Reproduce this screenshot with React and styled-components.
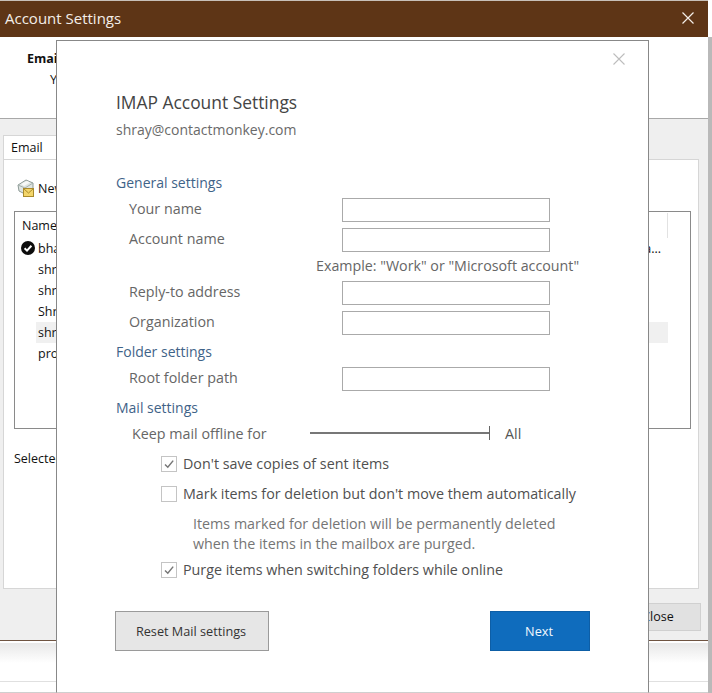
import React from "react";
import styled, { createGlobalStyle } from "styled-components";

const Global = createGlobalStyle`
  html, body { margin: 0; padding: 0; background: #fff; }
  body { font-family: "Open Sans", "Liberation Sans", sans-serif; }
  * { box-sizing: border-box; }
`;

const Page = styled.div`
  position: relative;
  width: 712px;
  height: 693px;
  overflow: hidden;
  display: flex;
  background: #fff;
`;
const Backdrop = styled.div`
  width: 708px;
  height: 693px;
  display: flex;
  flex-direction: column;
  font-size: 12.5px;
  color: #111;
`;
const EdgeBar = styled.div`
  width: 4px;
  margin-top: 37px;
  background: #b9b9b9;
`;
const TopStrip = styled.div`
  height: 1px;
  background: #c8c0b8;
`;
const TitleBar = styled.div`
  height: 36px;
  background: #5e3516;
  color: #f4eee8;
  display: flex;
  align-items: center;
  justify-content: space-between;
  padding: 0 14px 2px 5px;
  font-size: 15px;
`;
const Header = styled.div`
  height: 82px;
  border-bottom: 1px solid #a8a8a8;
  padding: 12px 0 0 27px;
`;
const HeaderTitle = styled.div`
  font-weight: 700;
  line-height: 20px;
`;
const HeaderText = styled.div`
  margin: 1px 0 0 23px;
  line-height: 20px;
  white-space: nowrap;
`;
const Body = styled.div`
  height: 522px;
  background: #efefef;
  padding: 16px 0 0 3px;
  display: flex;
  flex-direction: column;
`;
const Tab = styled.div`
  width: 70px;
  height: 25px;
  background: #fff;
  border: 1px solid #d6d6d6;
  border-bottom: none;
  padding-left: 7px;
  line-height: 23px;
`;
const TabPanel = styled.div`
  width: 696px;
  height: 430px;
  margin-top: -1px;
  background: #fff;
  border: 1px solid #d6d6d6;
  padding: 0 7px 0 10px;
`;
const Toolbar = styled.div`
  height: 51px;
  padding: 6px 0 0 3px;
  display: flex;
  align-items: center;
  gap: 4px;
`;
const AccountList = styled.div`
  height: 218px;
  border: 1px solid #8a8a8a;
`;
const ListHead = styled.div`
  height: 25px;
  margin-top: 1px;
  padding-left: 7px;
  line-height: 25px;
  width: 653px;
  border-right: 1px solid #e2e2e2;
`;
const AccountRow = styled.div`
  display: grid;
  grid-template-columns: 21px 632px;
  height: 21px;
`;
const StatusSlot = styled.div`
  display: flex;
  align-items: center;
  padding-left: 6px;
`;
const RowBody = styled.div`
  display: flex;
  justify-content: space-between;
  align-items: center;
  padding: 0 7px 0 2px;
  background: ${(p) => (p.$selected ? "#f0f0f0" : "transparent")};
`;
const SelectedNote = styled.div`
  margin-top: 20px;
  line-height: 20px;
`;
const Actions = styled.div`
  display: flex;
  justify-content: flex-end;
  margin-top: 14px;
  padding-right: 7px;
`;
const CloseAction = styled.div`
  width: 86px;
  height: 28px;
  background: #e1e1e1;
  border: 1px solid #d0d0d0;
  display: flex;
  align-items: center;
  justify-content: center;
`;
const ClippedLine = styled.div`
  height: 3px;
  overflow: hidden;
  border-top: 1px solid #6f5442;
  white-space: nowrap;
  line-height: 12px;
`;
const ClippedText = styled.div`
  margin-top: -10px;
`;
const Shadow = styled.div`
  height: 25px;
  background: linear-gradient(#e8e8e8, #fff 80%);
`;
const Spacer = styled.div`
  height: 13px;
`;
const FootLine = styled.div`
  height: 11px;
  border-top: 1px solid #e0e0e0;
`;
const FootEnd = styled.div`
  height: 1px;
  background: #cfcfcf;
`;

const Modal = styled.div`
  position: absolute;
  left: 56px;
  top: 40px;
  width: 593px;
  height: 653px;
  background: #fff;
  border: 1px solid #888;
  border-bottom-color: #cfcfcf;
  padding: 49px 59px 0 59px;
`;
const ModalClose = styled.div`
  position: absolute;
  right: 23px;
  top: 12px;
  display: flex;
`;
const Title = styled.div`
  font-size: 17.4px;
  line-height: 24px;
  color: #444;
`;
const Subtitle = styled.div`
  margin-top: 6px;
  font-size: 14px;
  line-height: 20px;
  color: #6a6a6a;
`;
const Section = styled.div`
  margin-top: ${(p) => p.$top}px;
  font-size: 14px;
  line-height: 20px;
  color: #3f6388;
`;
const Field = styled.div`
  display: grid;
  grid-template-columns: 226px 208px;
  align-items: center;
  height: 24px;
  margin-top: ${(p) => p.$top}px;
`;
const FieldLabel = styled.div`
  padding-left: 13px;
  padding-bottom: 3px;
  font-size: 14.3px;
  color: #666;
`;
const Input = styled.div`
  height: 24px;
  background: #fff;
  border: 1px solid #aaa;
`;
const Example = styled.div`
  margin: 4px 0 5px 200px;
  font-size: 14.25px;
  line-height: 20px;
  color: #666;
  white-space: nowrap;
`;
const OfflineRow = styled.div`
  display: grid;
  grid-template-columns: 178px 180px auto;
  align-items: center;
  height: 20px;
  margin-top: 5px;
  padding-left: 16px;
  font-size: 14.3px;
  color: #666;
`;
const Slider = styled.div`
  position: relative;
  height: 2px;
  background: #777;
`;
const SliderEnd = styled.div`
  position: absolute;
  right: 0;
  top: -6px;
  width: 1px;
  height: 14px;
  background: #666;
`;
const SliderValue = styled.div`
  padding-left: 15px;
  color: #555;
`;
const CheckRow = styled.div`
  display: flex;
  align-items: center;
  gap: 6px;
  height: 20px;
  margin: ${(p) => p.$top}px 0 0 45px;
  font-size: 14.3px;
  color: #505050;
  white-space: nowrap;
`;
const CheckLabel = styled.span`
  padding-bottom: 2px;
`;
const Box = styled.div`
  width: 16px;
  height: 16px;
  border: 1px solid #c4c4c4;
  background: #fff;
  display: flex;
  align-items: center;
  justify-content: center;
`;
const Note = styled.div`
  margin: 10px 0 6px 77px;
  font-size: 14.3px;
  line-height: 20px;
  color: #757575;
  white-space: nowrap;
`;
const Buttons = styled.div`
  display: flex;
  justify-content: space-between;
  margin: 31px -1px 0 -1px;
`;
const Button = styled.div`
  width: ${(p) => p.$width}px;
  height: 40px;
  padding-right: 2px;
  display: flex;
  align-items: center;
  justify-content: center;
  font-size: 12.7px;
  background: ${(p) => (p.$primary ? "#0f6cbd" : "#e6e6e6")};
  border: 1px solid ${(p) => (p.$primary ? "#0d5ea6" : "#9a9a9a")};
  color: ${(p) => (p.$primary ? "#f2f8fd" : "#333")};
`;

const Cross = ({ color, size, width }) => (
  <svg width={size} height={size} viewBox="0 0 12 12" fill="none">
    <path d="M0.5 0.5 L11.5 11.5 M11.5 0.5 L0.5 11.5" stroke={color} strokeWidth={width} />
  </svg>
);

const Tick = () => (
  <svg width="12" height="12" viewBox="0 0 12 12" fill="none">
    <path d="M2 6.5 L4.8 9.2 L10.2 2.6" stroke="#777" strokeWidth="1.5" />
  </svg>
);

const DefaultMark = () => (
  <svg width="14" height="14" viewBox="0 0 14 14">
    <circle cx="7" cy="7" r="7" fill="#0c0c0c" />
    <path d="M3.6 7.2 L6 9.6 L10.4 4.8" fill="none" stroke="#fff" strokeWidth="2" />
  </svg>
);

const NewMailIcon = () => (
  <svg width="17" height="18" viewBox="0 0 17 18">
    <path d="M1 6 L9 1 L16 4 L16 10 L8 15 L2 12 Z" fill="#dfe5e2" stroke="#8d9a96" strokeWidth="1" />
    <path d="M1 6 L8 9 L16 4" fill="none" stroke="#a4b0ac" strokeWidth="1" />
    <path d="M4 5 L10 2 L13 3.5 L7 7 Z" fill="#f7f9f8" />
    <rect x="6.5" y="9.5" width="10" height="8" fill="#f3d56a" stroke="#a98a2c" strokeWidth="1" />
    <path d="M6.5 9.5 L11.5 14 L16.5 9.5" fill="none" stroke="#a98a2c" strokeWidth="1" />
  </svg>
);

const accounts = [
  { name: "bhavin", mark: true, tail: "a..." },
  { name: "shray" },
  { name: "shray" },
  { name: "Shray" },
  { name: "shray", selected: true },
  { name: "proton" },
];

const fieldsA = [
  { label: "Your name", top: 5 },
  { label: "Account name", top: 6 },
];
const fieldsB = [
  { label: "Reply-to address", top: 0 },
  { label: "Organization", top: 6 },
];

const Check = ({ on, top, children }) => (
  <CheckRow $top={top}>
    <Box>{on && <Tick />}</Box>
    <CheckLabel>{children}</CheckLabel>
  </CheckRow>
);

export default function App() {
  return (
    <>
      <Global />
      <Page>
        <Backdrop>
          <TopStrip />
          <TitleBar>
            Account Settings
            <Cross color="#f4eee8" size={12} width={1.2} />
          </TitleBar>
          <Header>
            <HeaderTitle>Email Accounts</HeaderTitle>
            <HeaderText>You can add or remove an account.</HeaderText>
          </Header>
          <Body>
            <Tab>Email</Tab>
            <TabPanel>
              <Toolbar>
                <NewMailIcon />
                New...
              </Toolbar>
              <AccountList>
                <ListHead>Name</ListHead>
                {accounts.map((a, i) => (
                  <AccountRow key={i}>
                    <StatusSlot>{a.mark && <DefaultMark />}</StatusSlot>
                    <RowBody $selected={a.selected}>
                      <span>{a.name}</span>
                      <span>{a.tail}</span>
                    </RowBody>
                  </AccountRow>
                ))}
              </AccountList>
              <SelectedNote>Selected account</SelectedNote>
            </TabPanel>
            <Actions>
              <CloseAction>Close</CloseAction>
            </Actions>
          </Body>
          <ClippedLine>
            <ClippedText>unt to cr</ClippedText>
          </ClippedLine>
          <Shadow />
          <Spacer />
          <FootLine />
          <FootEnd />
        </Backdrop>
        <EdgeBar />
        <Modal>
          <ModalClose>
            <Cross color="#bdbdbd" size={12} width={1.1} />
          </ModalClose>
          <Title>IMAP Account Settings</Title>
          <Subtitle>shray@contactmonkey.com</Subtitle>
          <Section $top={33}>General settings</Section>
          {fieldsA.map((f) => (
            <Field key={f.label} $top={f.top}>
              <FieldLabel>{f.label}</FieldLabel>
              <Input />
            </Field>
          ))}
          <Example>Example: "Work" or "Microsoft account"</Example>
          {fieldsB.map((f) => (
            <Field key={f.label} $top={f.top}>
              <FieldLabel>{f.label}</FieldLabel>
              <Input />
            </Field>
          ))}
          <Section $top={7}>Folder settings</Section>
          <Field $top={5}>
            <FieldLabel>Root folder path</FieldLabel>
            <Input />
          </Field>
          <Section $top={7}>Mail settings</Section>
          <OfflineRow>
            <span>Keep mail offline for</span>
            <Slider>
              <SliderEnd />
            </Slider>
            <SliderValue>All</SliderValue>
          </OfflineRow>
          <Check on top={11}>Don't save copies of sent items</Check>
          <Check top={10}>Mark items for deletion but don't move them automatically</Check>
          <Note>
            Items marked for deletion will be permanently deleted
            <br />
            when the items in the mailbox are purged.
          </Note>
          <Check on top={0}>Purge items when switching folders while online</Check>
          <Buttons>
            <Button $width={154}>Reset Mail settings</Button>
            <Button $width={100} $primary>Next</Button>
          </Buttons>
        </Modal>
      </Page>
    </>
  );
}
